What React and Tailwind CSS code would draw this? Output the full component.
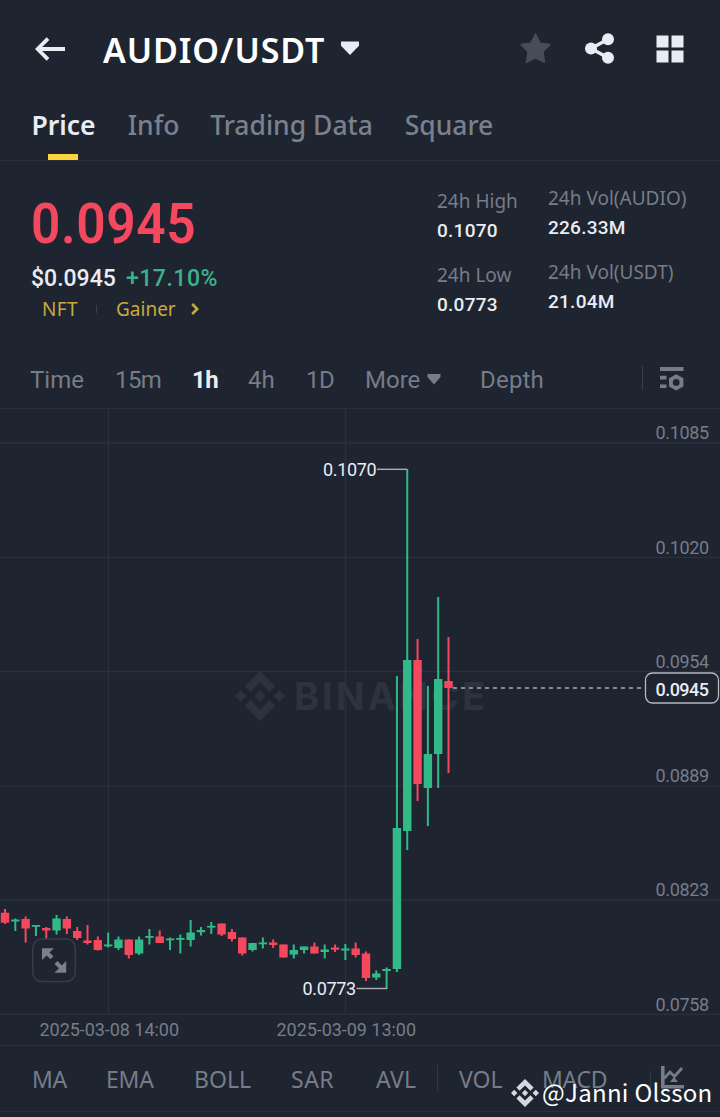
const UP = '#32b988'
const DOWN = '#f4485f'

const TABS = [
  { label: 'Price', active: true, width: 'w-[65px]' },
  { label: 'Info', width: 'w-[53px]' },
  { label: 'Trading Data', width: 'w-[161px]' },
  { label: 'Square', width: 'w-[92px]' },
]

// [bodyTop, bodyBottom, wickTop, wickBottom, color]
const CANDLES = [
  [912.7, 922.7, 909, 924, DOWN],
  [919.5, 921.5, 918.5, 931, UP],
  [919, 928.5, 916.5, 942.5, DOWN],
  [925, 926.8, 925, 936, UP],
  [928, 930.5, 927, 939, DOWN],
  [918.5, 930.5, 915, 934.5, UP],
  [919, 928.5, 916.5, 934, DOWN],
  [931, 938, 927, 940, DOWN],
  [940.5, 943, 925, 944.5, DOWN],
  [940, 950, 936.5, 950.5, DOWN],
  [944.5, 946.3, 932.5, 947.5, UP],
  [939.5, 948, 936.5, 950, UP],
  [939.5, 955, 939.5, 958.5, DOWN],
  [939.5, 953.5, 936.5, 955, UP],
  [936, 937.8, 929, 944.5, UP],
  [936.5, 943, 930.5, 943, DOWN],
  [938.5, 940.3, 937.5, 950, UP],
  [938, 939.8, 934.5, 953.5, UP],
  [932.5, 940, 920, 946.5, UP],
  [930, 932.2, 927, 935.5, UP],
  [925.8, 927.6, 922, 934, UP],
  [923.5, 934.5, 923.5, 936, DOWN],
  [932, 939, 929, 941.5, DOWN],
  [937.5, 953.5, 937.5, 955.5, DOWN],
  [943, 950, 943, 951.5, UP],
  [942.5, 944.3, 937.5, 948.5, UP],
  [942.5, 945, 939.5, 948, DOWN],
  [944.5, 957.5, 944.5, 957.5, DOWN],
  [950, 954.5, 944.5, 958.5, UP],
  [946.5, 950, 946.5, 953.5, UP],
  [946.5, 953.5, 942.5, 953.5, DOWN],
  [949.5, 952, 944.5, 958.5, UP],
  [947.5, 949.7, 944.5, 952, DOWN],
  [948.5, 950.5, 944, 960, UP],
  [948.5, 955, 942.5, 957.5, DOWN],
  [953.5, 978, 951.5, 981, DOWN],
  [973.5, 977.5, 970.5, 980, UP],
  [969, 971, 967.5, 989, UP],
  [828, 969, 676, 972, UP],
  [660, 831, 469, 850, UP],
  [660, 784, 639, 801, DOWN],
  [754, 788, 686, 826, UP],
  [679, 754, 597, 788, UP],
  [681, 688, 637, 773, DOWN],
]

const LEVELS = [
  ['0.1085', 443],
  ['0.1020', 557.3],
  ['0.0954', 671.5],
  ['0.0889', 785.8],
  ['0.0823', 900],
  ['0.0758', 1014.3],
]

function BinanceMark(props) {
  return (
    <svg viewBox="0 0 28 28" fill="currentColor" {...props}>
      <path d="M14 0l8.6 8.6-3.2 3.2L14 6.4l-5.4 5.4-3.2-3.2z" />
      <path d="M14 28l8.6-8.6-3.2-3.2-5.4 5.4-5.4-5.4-3.2 3.2z" />
      <path d="M14 10.8l3.2 3.2-3.2 3.2-3.2-3.2z" />
      <path d="M3.2 10.8L6.4 14l-3.2 3.2L0 14z" />
      <path d="M24.8 10.8L28 14l-3.2 3.2-3.2-3.2z" />
    </svg>
  )
}

function Header() {
  return (
    <div className="h-[100px] flex items-center pl-[35px] pr-9 text-[#eaecf4]">
      <svg className="w-[30px] h-6 -mt-[3px]" viewBox="0 0 30 24" fill="none" stroke="currentColor" strokeWidth="3.8">
        <path d="M13 1.6L2.6 12L13 22.4M2.6 12H30" />
      </svg>
      <h1 className="ml-[38px] w-[222px] -mt-px whitespace-nowrap text-[34px] leading-none font-semibold text-white tracking-[0.9px]">
        AUDIO/USDT
      </h1>
      <svg className="ml-[15px] w-5 h-[15px] -mt-[3px]" viewBox="0 0 20 15" fill="currentColor">
        <path d="M1 .5h18v4.2L10 14 1 4.7z" />
      </svg>
      <div className="ml-auto -mt-[3px] flex items-center">
        <svg className="w-[31px] h-[31px] text-[#474d58]" viewBox="0 0 31 31" fill="currentColor" stroke="currentColor" strokeWidth="1.6" strokeLinejoin="round">
          <path d="M15.5 1.2l4.5 9 9.8 1.4-7 7 1.7 10.7-9-4.5-9 4.5 1.7-10.7-7-7 9.8-1.4z" />
        </svg>
        <svg className="ml-[34px] w-[29px] h-[31px]" viewBox="0 0 29 31" fill="currentColor">
          <path d="M23 6.3L6 15.5l17 9.2" fill="none" stroke="currentColor" strokeWidth="3.4" />
          <circle cx="6" cy="15.5" r="6" />
          <circle cx="23" cy="6.3" r="6" />
          <circle cx="23" cy="24.7" r="6" />
        </svg>
        <svg className="ml-[42px] w-7 h-7" viewBox="0 0 28 28" fill="currentColor">
          <path d="M.5.5h12v12H.5zM15.5.5h12v12h-12zM.5 15.5h12v12H.5zM15.5 15.5h12v12h-12z" />
        </svg>
      </div>
    </div>
  )
}

function Tabs() {
  return (
    <div className="h-[61px] flex gap-[31px] pl-[31px] border-b border-[#2b313b] text-[26.5px] leading-[50px] font-medium whitespace-nowrap text-[#7a808c]">
      {TABS.map(tab => (
        <div key={tab.label} className={`${tab.width} flex flex-col justify-between items-center`}>
          <span className={tab.active ? 'font-semibold text-[#eaecf4]' : ''}>{tab.label}</span>
          {tab.active && <span className="w-[30px] h-[6px] mr-0.5 bg-[#fcd33c]" />}
        </div>
      ))}
    </div>
  )
}

function Stat({ label, value }) {
  return (
    <div className="h-[74px] whitespace-nowrap">
      <div className="text-[19px] leading-[29px] text-[#767c88]">{label}</div>
      <div className="font-[Roboto] font-medium text-[19px] leading-[29px] tracking-[0.25px] text-[#eaecf4]">{value}</div>
    </div>
  )
}

function Summary() {
  return (
    <div className="h-[189px] flex pl-[31px]">
      <div className="w-[406px] pt-[33px]">
        <div className="origin-left scale-x-[0.92] font-[Roboto] font-semibold text-[56px] leading-[60px] tracking-[0.6px] text-[#f4485f]">
          0.0945
        </div>
        <div className="mt-[9px] flex font-[Roboto] font-medium text-[23px] leading-[32px] whitespace-nowrap">
          <span className="w-[95px] text-[#eaecf4]">$0.0945</span>
          <span className="tracking-[0.5px] text-[#3bb289]">+17.10%</span>
        </div>
        <div className="ml-[11px] -mt-0.5 flex items-center text-[19px] leading-8 text-[#c9aa3d]">
          <span className="w-[36px] tracking-[0.3px]">NFT</span>
          <span className="ml-[18px] w-px h-2 bg-[#3a404b]" />
          <span className="ml-[19px] w-[59px]">Gainer</span>
          <svg className="ml-[16px] w-2 h-[12px]" viewBox="0 0 8 12" fill="none" stroke="currentColor" strokeWidth="2.6">
            <path d="M1.2 1L6.2 6l-5 5" />
          </svg>
        </div>
      </div>
      <div className="w-[111px] pt-[26px]">
        <Stat label="24h High" value="0.1070" />
        <Stat label="24h Low" value="0.0773" />
      </div>
      <div className="pt-[23px]">
        <Stat label="24h Vol(AUDIO)" value="226.33M" />
        <Stat label="24h Vol(USDT)" value="21.04M" />
      </div>
    </div>
  )
}

function Intervals() {
  return (
    <div className="h-[59px] pt-[2px] pl-[30px] flex items-center border-b border-[#2b313b] font-[Roboto] text-[24px] whitespace-nowrap text-[#767c88]">
      <span className="w-[85px]">Time</span>
      <span className="w-[77px] tracking-[-0.6px]">15m</span>
      <span className="w-[56px] font-bold tracking-[-0.5px] text-[#eaecf4]">1h</span>
      <span className="w-[58px]">4h</span>
      <span className="w-[59px] tracking-[-0.5px]">1D</span>
      <span className="w-[62px]">More</span>
      <svg className="w-[14px] h-[11px] -mt-0.5" viewBox="0 0 14 11" fill="currentColor">
        <path d="M.5 0h13v3L7 10.5.5 3z" />
      </svg>
      <span className="ml-[39px] w-[162px] tracking-[0.2px]">Depth</span>
      <span className="w-px h-6 -mt-1 bg-[#3a404b]" />
      <svg className="ml-[17px] w-6 h-6 -mt-0.5" viewBox="0 0 24 24" fill="currentColor">
        <path d="M0 0h23.5v4H0zM0 8.8h6.5v3.6H0zM0 17.4h6.5V21H0z" />
        <path fillRule="evenodd" d="M16.2 7.2l7.2 4v8.4l-7.2 4-7.2-4v-8.4zM16.2 12a3.4 3.4 0 100 6.8 3.4 3.4 0 000-6.8z" />
      </svg>
    </div>
  )
}

function Chart() {
  return (
    <svg className="block w-[720px] h-[636px] font-[Roboto]" viewBox="0 409 720 636" fontSize="18">
      <g stroke="#2b313b" strokeWidth="1.3">
        {LEVELS.map(([label, y]) => (
          <line key={label} x1="0" x2="720" y1={y} y2={y} />
        ))}
        <line x1="108.5" x2="108.5" y1="409" y2="1014" />
        <line x1="345.5" x2="345.5" y1="409" y2="1014" />
      </g>

      <g className="text-[#2d333c]" fill="currentColor">
        <BinanceMark x="235" y="671" width="50" height="50" />
        <text x="294" y="709.5" className="font-[Inter] font-bold" fontSize="38" textLength="191">BINANCE</text>
      </g>

      {CANDLES.map(([top, bottom, high, low, color], i) => {
        const x = 5 + i * 10.314
        return (
          <g key={i} fill={color}>
            <rect x={x - 1} y={high} width="2" height={low - high} />
            <rect x={x - 4.2} y={top} width="8.4" height={bottom - top} />
          </g>
        )
      })}

      <g fill="none" stroke="#a9adb6" strokeWidth="1.4">
        <path d="M377 469.3H407" />
        <path d="M356.5 988.5H387" />
        <path d="M453 688H645" strokeDasharray="4 4" />
      </g>
      <g fill="#eaecf4">
        <text x="323" y="476.4" textLength="53.5">0.1070</text>
        <text x="302.5" y="995.4" textLength="53.5">0.0773</text>
      </g>

      <g fill="#767c88">
        {LEVELS.map(([label, y]) => (
          <text key={label} x="655.5" y={y - 3.8} textLength="53.5">{label}</text>
        ))}
        <text x="39.5" y="1036.4" textLength="139.5">2025-03-08 14:00</text>
        <text x="276.5" y="1036.4" textLength="139.5">2025-03-09 13:00</text>
      </g>

      <rect x="645.5" y="673" width="73" height="30" rx="7" fill="#1e2530" stroke="#b4b8c0" strokeWidth="1.3" />
      <text x="655.5" y="696" textLength="53.5" fill="#eaecf4" fontWeight="500">0.0945</text>

      {/* expand button */}
      <rect x="32.8" y="939" width="42.5" height="42.5" rx="9" fill="#1e2530" stroke="#363c46" strokeWidth="1.6" />
      <path fill="#7a808c" d="M42 948.3h11.8L42 960.1zM66.2 972.7H54.4l11.8-11.8z" />
      <path stroke="#7a808c" strokeWidth="4.2" d="M45 951.3l7 6.5M63.2 969.7l-7.2-7.2" />
    </svg>
  )
}

function Indicators() {
  return (
    <div className="h-[67px] pt-[2px] pl-[32px] flex items-center border-y border-[#2b313b] text-[23px] whitespace-nowrap text-[#767c88]">
      <span className="w-[74px] tracking-[-0.3px]">MA</span>
      <span className="w-[88px] tracking-[-0.2px]">EMA</span>
      <span className="w-[97px]">BOLL</span>
      <span className="w-[85px] tracking-[0.5px]">SAR</span>
      <span className="w-[61px] tracking-[0.2px]">AVL</span>
      <span className="w-px h-[26px] -mt-1 bg-[#323843]" />
      <span className="ml-[21px] w-[83px]">VOL</span>
      <span className="w-[108px] tracking-[-0.3px]">MACD</span>
      <span className="w-px h-[18px] bg-[#323843]" />
      <svg className="ml-[10px] w-[23px] h-[23px] -mt-1" viewBox="0 0 23 23" fill="none" stroke="currentColor" strokeWidth="3.6">
        <path d="M1.8 0v20.7H23" />
        <path d="M3 12.5l6-6.5 4.5 4.5L21 2" strokeWidth="2.8" />
        <path d="M13 11l4 5H9z" fill="currentColor" stroke="none" />
      </svg>
    </div>
  )
}

export default function App() {
  return (
    <div className="relative w-[720px] h-[1117px] overflow-hidden bg-[#1e2530] font-['Noto_Sans',sans-serif]">
      <Header />
      <Tabs />
      <Summary />
      <Intervals />
      <Chart />
      <Indicators />
      <div className="absolute left-[511px] top-[1076px] flex items-center gap-[3px] text-[#d5d8de]">
        <BinanceMark className="w-7 h-7 mt-0.5" />
        <span className="font-['Noto_Sans_CJK_SC',sans-serif] text-[24px] leading-8 tracking-[0.3px] whitespace-nowrap text-white">
          @Janni Olsson
        </span>
      </div>
    </div>
  )
}
